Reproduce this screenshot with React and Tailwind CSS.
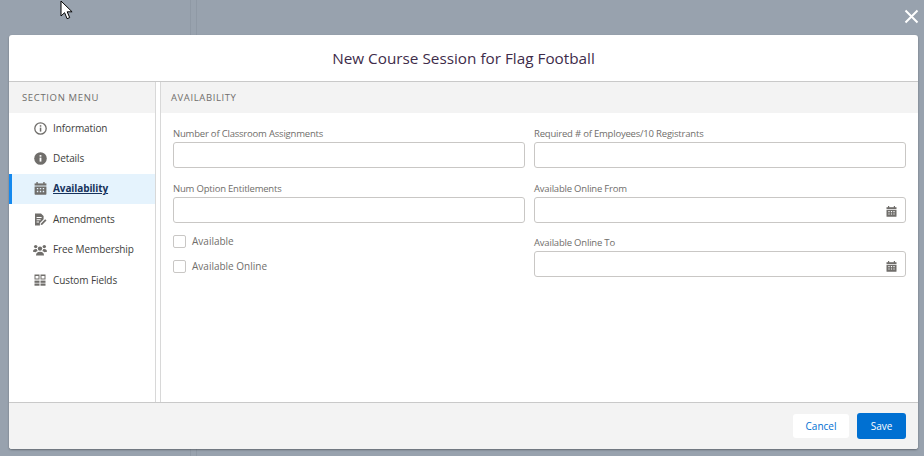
import React from "react";

const font = { fontFamily: '"Open Sans", sans-serif' };

const InfoOutline = () => (
  <svg width="13" height="13" viewBox="0 0 13 13" fill="none">
    <circle cx="6.5" cy="6.5" r="5.7" stroke="#706e6b" strokeWidth="1.3" />
    <rect x="5.8" y="5.6" width="1.5" height="4" fill="#706e6b" />
    <rect x="5.8" y="3.2" width="1.5" height="1.5" fill="#706e6b" />
  </svg>
);

const InfoFilled = () => (
  <svg width="13" height="13" viewBox="0 0 13 13">
    <circle cx="6.5" cy="6.5" r="6.3" fill="#706e6b" />
    <rect x="5.6" y="5.6" width="1.8" height="4" fill="#fff" />
    <rect x="5.6" y="3.1" width="1.8" height="1.6" fill="#fff" />
  </svg>
);

const CalendarIcon = ({ size = 11 }) => (
  <svg width={size} height={size} viewBox="0 0 11 11" fill="#706e6b">
    <rect x="2" y="0" width="1.2" height="2" />
    <rect x="7.8" y="0" width="1.2" height="2" />
    <rect x="0.5" y="1.2" width="10" height="1.8" />
    <path fillRule="evenodd" d="M.5 3.8h10v6.4a.6.6 0 0 1-.6.6H1.1a.6.6 0 0 1-.6-.6zM2.4 5v1.2h1.2V5zm2.5 0v1.2h1.2V5zm2.5 0v1.2h1.2V5zM2.4 7.4v1.2h1.2V7.4zm2.5 0v1.2h1.2V7.4zm2.5 0v1.2h1.2V7.4z" />
  </svg>
);

const AmendIcon = () => (
  <svg width="13" height="13" viewBox="0 0 13 13" fill="#706e6b">
    <path fillRule="evenodd" d="M1 .5h6l2.6 2.6v3.2L5.9 10v2.5H1zM2.6 4v1h5V4zm0 2.2v1h4v-1zm0 2.2v1h2.4v-1z" />
    <path d="M7 10.4l4.2-4.2 1.3 1.3-4.2 4.2-1.6.3z" />
  </svg>
);

const UsersIcon = () => (
  <svg width="14" height="12" viewBox="0 0 14 12" fill="#706e6b">
    <circle cx="7" cy="4.6" r="2.2" />
    <path d="M3 11.5c0-2.6 1.4-3.8 4-3.8s4 1.2 4 3.8z" />
    <circle cx="2.7" cy="2.6" r="1.7" />
    <path d="M0 7.8C0 5.9 1 5 2.8 5c.4 0 .8.1 1.1.2.1.7.4 1.3.9 1.7-1 .2-1.7.6-2.2 1.3z" />
    <circle cx="11.3" cy="2.6" r="1.7" />
    <path d="M14 7.8c0-1.9-1-2.8-2.8-2.8-.4 0-.8.1-1.1.2-.1.7-.4 1.3-.9 1.7 1 .2 1.7.6 2.2 1.3z" />
  </svg>
);

const GridIcon = () => (
  <svg width="12" height="12" viewBox="0 0 12 12" fill="#706e6b">
    <path fillRule="evenodd" d="M.5.5h5v5h-5zM1.5 2v2.6h3V2z" />
    <path fillRule="evenodd" d="M6.5.5h5v5h-5zM7.5 2v2.6h3V2z" />
    <rect x="0.5" y="6.6" width="5" height="2.2" />
    <rect x="6.5" y="6.6" width="5" height="2.2" />
    <rect x="0.5" y="9.5" width="5" height="2.2" />
    <rect x="6.5" y="9.5" width="5" height="2.2" />
  </svg>
);

const menu = [
  { label: "Information", icon: <InfoOutline /> },
  { label: "Details", icon: <InfoFilled /> },
  { label: "Availability", icon: <CalendarIcon size={13} />, active: true },
  { label: "Amendments", icon: <AmendIcon /> },
  { label: "Free Membership", icon: <UsersIcon /> },
  { label: "Custom Fields", icon: <GridIcon /> },
];

const Field = ({ label, date, iconClass, className }) => (
  <div className={className}>
    <div className="h-[18px] text-[9.5px] tracking-[-0.2px] leading-[19px] text-[#706e6b]">{label}</div>
    <div className="h-[26px] flex items-center justify-end pr-[8px] bg-white border border-[#c9c7c5] rounded-[3px]">
      {date && (
        <div className={iconClass}>
          <CalendarIcon />
        </div>
      )}
    </div>
  </div>
);

const Check = ({ label, className }) => (
  <div className={`flex items-center gap-[6px] ${className}`}>
    <div className="w-[13px] h-[13px] bg-white border border-[#c9c7c5] rounded-[2px]" />
    <span className="pt-[1px] text-[10px] text-[#706e6b]">{label}</span>
  </div>
);

export default function App() {
  return (
    <div className="relative w-[924px] h-[456px] overflow-hidden bg-[#98a2ae] pt-[35px] pl-[9px]" style={font}>
      {/* faint page columns behind the overlay */}
      <div className="absolute top-0 bottom-0 left-[190px] w-[7px] border-x border-[#8f99a5]" />

      {/* mouse cursor */}
      <svg className="absolute left-[60px] top-0" width="14" height="21" viewBox="0 0 14 21">
        <path d="M1 1v15l3.6-3.3 2.5 6 2.6-1.1-2.5-5.8h4.9z" fill="#fff" stroke="#000" strokeWidth="1" />
      </svg>

      {/* close */}
      <svg className="absolute left-[904px] top-[9px]" width="15" height="15" viewBox="0 0 15 15">
        <path d="M1.5 1.5l12 12M13.5 1.5l-12 12" stroke="#fff" strokeWidth="2" />
      </svg>

      <div className="relative w-[909px] h-[414px] flex flex-col bg-white rounded-[3px] overflow-hidden shadow-[0_1px_2px_rgba(0,0,0,0.35)]">
        <div className="h-[47px] shrink-0 flex items-center justify-center border-b border-[#c9c9c9] text-[15.3px] text-[#3e2c4a]">
          New Course Session for Flag Football
        </div>

        <div className="flex-1 flex min-h-0">
          <div className="w-[147px] shrink-0 border-r border-[#d8d8d8]">
            <div className="h-[31px] flex items-center pl-[13px] pt-[1px] bg-[#f3f3f3] text-[9.5px] tracking-[0.65px] text-[#706e6b]">
              SECTION MENU
            </div>
            {menu.map((item) => (
              <div
                key={item.label}
                className={
                  item.active
                    ? "h-[30.4px] flex items-center bg-[#e5f3fd] border-l-[3px] border-[#1589ee]"
                    : "h-[30.4px] flex items-center border-l-[3px] border-transparent"
                }
              >
                <div className="w-[35px] flex justify-end shrink-0">
                  <div className="w-[14px] flex justify-center">{item.icon}</div>
                </div>
                <span
                  className={
                    item.active
                      ? "ml-[6px] text-[10px] tracking-[-0.1px] font-bold underline text-[#16325c]"
                      : "ml-[6px] text-[10px] tracking-[-0.1px] text-[#3e3e3c]"
                  }
                >
                  {item.label}
                </span>
              </div>
            ))}
          </div>

          <div className="flex-1 ml-[4px] border-l border-[#d8d8d8]">
            <div className="h-[31px] flex items-center pl-[10px] pt-[1px] bg-[#f3f3f3] text-[9.5px] tracking-[0.6px] text-[#706e6b]">
              AVAILABILITY
            </div>
            <div className="flex gap-[9px] pl-[12px] pr-[12px] pt-[11px]">
              <div className="w-[352px]">
                <Field label="Number of Classroom Assignments" />
                <Field label="Num Option Entitlements" className="mt-[11px]" />
                <Check label="Available" className="mt-[10px]" />
                <Check label="Available Online" className="mt-[9px]" />
              </div>
              <div className="w-[372px]">
                <Field label="Required # of Employees/10 Registrants" />
                <Field label="Available Online From" date iconClass="mt-[2px]" className="mt-[11px]" />
                <Field label="Available Online To" date iconClass="mt-[4px]" className="mt-[10px]" />
              </div>
            </div>
          </div>
        </div>

        <div className="h-[47px] shrink-0 flex items-center justify-end gap-[8px] pr-[12px] bg-[#f3f3f3] border-t border-[#c9c9c9]">
          <button className="w-[56px] h-[24px] bg-white rounded-[3px] text-[10px] text-[#0070d2]">Cancel</button>
          <button className="w-[49px] h-[26px] bg-[#0070d2] rounded-[3px] text-[10px] text-white">Save</button>
        </div>
      </div>
    </div>
  );
}
